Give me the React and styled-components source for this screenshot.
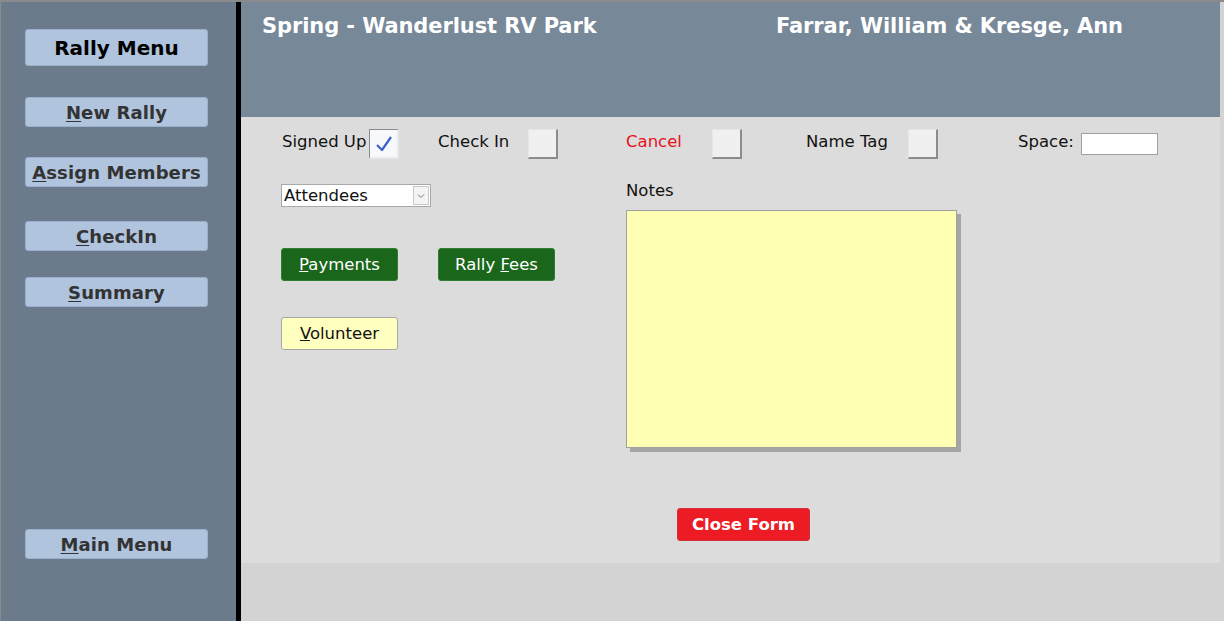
import React from 'react';
import styled, { createGlobalStyle } from 'styled-components';

const GlobalStyle = createGlobalStyle`
  html, body {
    margin: 0;
    padding: 0;
    background: #d3d3d3;
  }
  body {
    font-family: 'DejaVu Sans', Verdana, sans-serif;
  }
`;

// Whole window
const Frame = styled.div`
  display: flex;
  width: 1224px;
  height: 621px;
  box-sizing: border-box;
  border-top: 2px solid #8a8a8a;
  border-left: 1px solid #8a8a8a;
  background: #d3d3d3;
  overflow: hidden;
`;

// Left navigation
const Sidebar = styled.nav`
  display: flex;
  flex-direction: column;
  width: 240px;
  flex-shrink: 0;
  background: #6c7b8b;
  padding: 27px 0 0 24px;
  box-sizing: border-box;
  border-right: 5px solid #000;
`;

const NavButton = styled.button`
  width: 183px;
  height: ${({ big }) => (big ? '37px' : '30px')};
  margin-top: ${({ top }) => top}px;
  padding: 0;
  background: #b0c4de;
  border: 1px solid #9bb0cc;
  border-radius: 3px;
  font-family: inherit;
  font-weight: bold;
  font-size: ${({ big }) => (big ? '20px' : '18px')};
  letter-spacing: ${({ big }) => (big ? '0' : '0.1px')};
  color: ${({ big }) => (big ? '#000' : '#333')};
  white-space: nowrap;
  cursor: pointer;

  u {
    text-underline-offset: 2px;
  }
`;

// Right side
const Main = styled.div`
  display: flex;
  flex-direction: column;
  width: 979px;
  flex-shrink: 0;
`;

const Header = styled.header`
  display: flex;
  height: 115px;
  background: #778899;
  padding: 12px 0 0 21px;
  box-sizing: border-box;
  color: #fff;
  font-weight: bold;
  font-size: 21px;
  letter-spacing: -0.1px;
`;

const Title = styled.div`
  width: 514px;
`;

const Content = styled.section`
  height: 446px;
  background: #dcdcdc;
  padding: 12px 0 0 40px;
  box-sizing: border-box;
  color: #111;
  font-size: 16.5px;
`;

const TopRow = styled.div`
  display: flex;
  align-items: center;
  height: 30px;
  margin-left: 1px;
`;

const Field = styled.div`
  display: flex;
  align-items: center;
  width: ${({ w }) => w}px;
`;

const Label = styled.span`
  width: ${({ w }) => w}px;
  color: ${({ red }) => (red ? '#e8101a' : '#111')};
  margin-top: ${({ up }) => (up ? '-6px' : '0')};
`;

const CheckBox = styled.div`
  width: 30px;
  height: 30px;
  box-sizing: border-box;
  display: flex;
  align-items: center;
  justify-content: center;
  background: ${({ sunken }) => (sunken ? '#f7f8fb' : '#f0f0f0')};
  border-style: solid;
  border-width: 1px 2px 2px 1px;
  border-color: ${({ sunken }) =>
    sunken ? '#8a8a8a #e8e8e8 #e8e8e8 #8a8a8a' : '#e6e6e6 #8c8c8c #8c8c8c #e6e6e6'};
`;

const TextInput = styled.div`
  width: 77px;
  height: 22px;
  box-sizing: border-box;
  background: #fff;
  border: 1px solid #a0a0a0;
`;

const Body = styled.div`
  display: flex;
  margin-top: 25px;
`;

const LeftCol = styled.div`
  display: flex;
  flex-direction: column;
  width: 345px;
`;

const Select = styled.div`
  display: flex;
  width: 150px;
  height: 23px;
  box-sizing: border-box;
  background: #fff;
  border: 1px solid #a9a9a9;
  align-items: center;
  padding-left: 2px;
`;

const SelectText = styled.span`
  flex: 1;
`;

const SelectArrow = styled.span`
  display: flex;
  align-items: center;
  justify-content: center;
  width: 16px;
  height: 19px;
  margin-right: 1px;
  border: 1px solid #c8c8c8;
  background: #f4f4f4;
  box-sizing: border-box;
`;

const ButtonRow = styled.div`
  display: flex;
  gap: 40px;
  margin-top: ${({ top }) => top}px;
`;

const FormButton = styled.button`
  width: 117px;
  height: 33px;
  padding: 0;
  border-radius: 3px;
  font-family: inherit;
  font-size: 16.5px;
  cursor: pointer;
  background: ${({ tone }) => (tone === 'green' ? '#1a661a' : '#ffffc0')};
  color: ${({ tone }) => (tone === 'green' ? '#fff' : '#111')};
  border: 1px solid ${({ tone }) => (tone === 'green' ? '#2e7d32' : '#a8a8a8')};
`;

const NotesCol = styled.div`
  display: flex;
  flex-direction: column;
  margin-top: -3px;
`;

const NotesBox = styled.div`
  width: 331px;
  height: 238px;
  margin-top: 10px;
  box-sizing: border-box;
  background: #ffffb4;
  border: 1px solid #a0a0a0;
  box-shadow: 4px 4px 0 #a5a5a5;
`;

const CloseButton = styled.button`
  display: block;
  margin: 60px 0 0 396px;
  width: 133px;
  height: 33px;
  padding: 0;
  background: #ed1c24;
  color: #fff;
  border: 1px solid #d0303a;
  border-radius: 3px;
  font-family: inherit;
  font-weight: bold;
  font-size: 16.5px;
  cursor: pointer;
`;

const Footer = styled.div`
  flex: 1;
  background: #d3d3d3;
`;

const Check = () => (
  <svg width="20" height="20" viewBox="0 0 20 20">
    <path d="M3 11 L8 16 L17 3" fill="none" stroke="#3a62c8" strokeWidth="2.2" strokeLinejoin="round" />
  </svg>
);

const Chevron = () => (
  <svg width="8" height="6" viewBox="0 0 8 6">
    <path d="M1 1.5 L4 4.5 L7 1.5" fill="none" stroke="#777" strokeWidth="1" />
  </svg>
);

export default function App() {
  return (
    <>
      <GlobalStyle />
      <Frame>
        <Sidebar>
          <NavButton big top={0}>Rally Menu</NavButton>
          <NavButton top={31}><u>N</u>ew Rally</NavButton>
          <NavButton top={30}><u>A</u>ssign Members</NavButton>
          <NavButton top={34}><u>C</u>heckIn</NavButton>
          <NavButton top={26}><u>S</u>ummary</NavButton>
          <NavButton top={222}><u>M</u>ain Menu</NavButton>
        </Sidebar>
        <Main>
          <Header>
            <Title>Spring - Wanderlust RV Park</Title>
            <div>Farrar, William &amp; Kresge, Ann</div>
          </Header>
          <Content>
            <TopRow>
              <Field w={156}>
                <Label w={87} up>Signed Up</Label>
                <CheckBox sunken><Check /></CheckBox>
              </Field>
              <Field w={188}>
                <Label w={90} up>Check In</Label>
                <CheckBox />
              </Field>
              <Field w={180}>
                <Label w={86} up red>Cancel</Label>
                <CheckBox />
              </Field>
              <Field w={212}>
                <Label w={102} up>Name Tag</Label>
                <CheckBox />
              </Field>
              <Field w={160}>
                <Label w={63} up>Space:</Label>
                <TextInput />
              </Field>
            </TopRow>
            <Body>
              <LeftCol>
                <Select>
                  <SelectText>Attendees</SelectText>
                  <SelectArrow><Chevron /></SelectArrow>
                </Select>
                <ButtonRow top={41}>
                  <FormButton tone="green"><u>P</u>ayments</FormButton>
                  <FormButton tone="green">Rally <u>F</u>ees</FormButton>
                </ButtonRow>
                <ButtonRow top={36}>
                  <FormButton tone="yellow"><u>V</u>olunteer</FormButton>
                </ButtonRow>
              </LeftCol>
              <NotesCol>
                <span>Notes</span>
                <NotesBox />
              </NotesCol>
            </Body>
            <CloseButton>Close Form</CloseButton>
          </Content>
          <Footer />
        </Main>
      </Frame>
    </>
  );
}
